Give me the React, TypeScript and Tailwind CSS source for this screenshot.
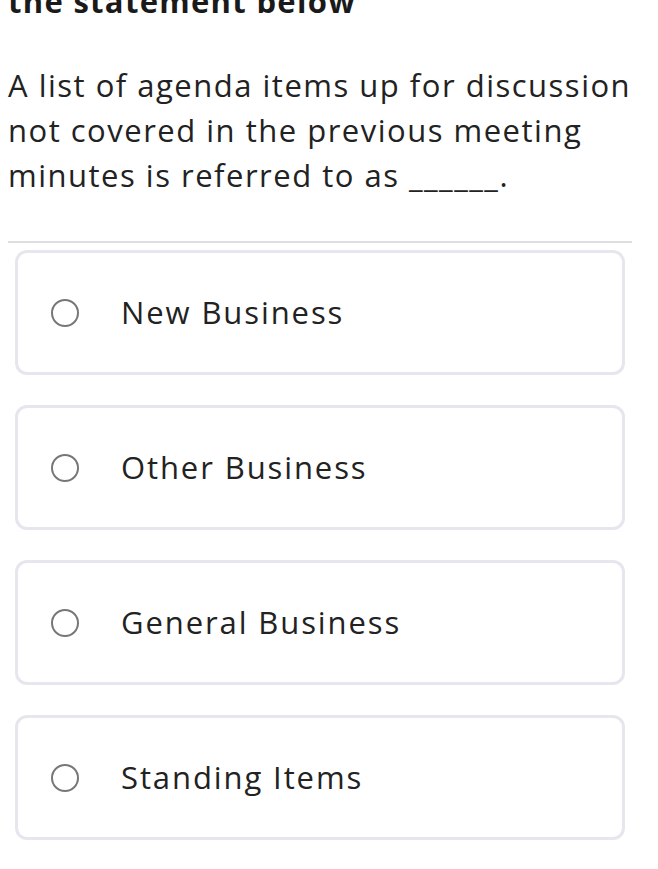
const options = ["New Business", "Other Business", "General Business", "Standing Items"];

export default function App() {
  return (
    <div className="min-h-screen bg-white pl-2 pr-[26px] text-[#222] overflow-hidden" style={{ fontFamily: '"Open Sans", "Liberation Sans", sans-serif' }}>
      <h2 className="-mt-[21px] text-[31px] leading-[45px] font-bold tracking-[1.3px] text-[#1a1a1a]">the statement below</h2>
      <p className="mt-[39px] whitespace-nowrap text-[31px] leading-[45px] font-normal tracking-[1.5px]">
        A list of agenda items up for discussion
        <br />
        not covered in the previous meeting
        <br />
        minutes is referred to as ______.
      </p>
      <div className="mt-[43px] h-[2px] bg-[#dedede]" />
      <div className="mt-[7px] mx-[7px] flex flex-col gap-[30px]">
        {options.map((opt) => (
          <label key={opt} className="flex h-[125px] items-center rounded-[12px] border-[3px] border-[#e6e6ee] bg-white pl-[33px]">
            <span className="h-[28px] w-[28px] shrink-0 rounded-full border-[2.5px] border-[#777]" />
            <span className="ml-[42px] text-[31px] leading-none tracking-[1.9px]">{opt}</span>
          </label>
        ))}
      </div>
    </div>
  );
}
